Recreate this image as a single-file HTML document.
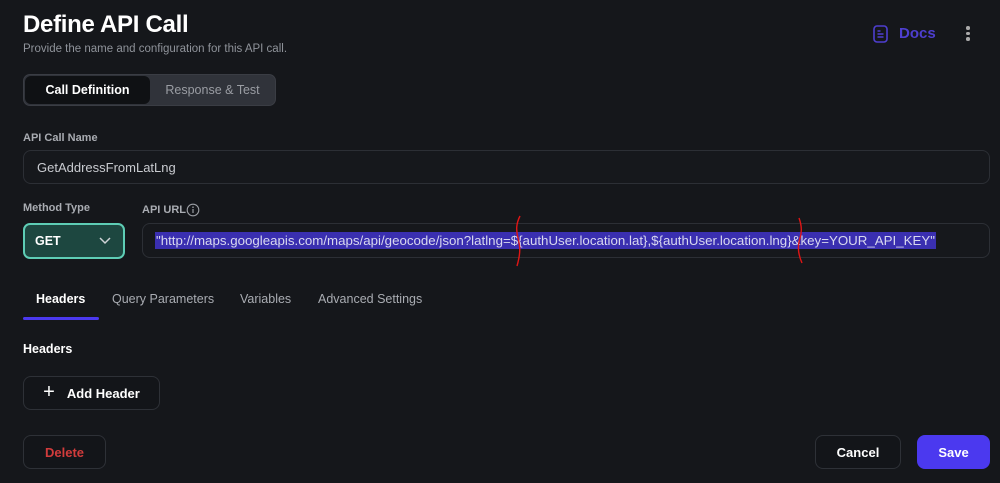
<!DOCTYPE html>
<html><head><meta charset="utf-8"><style>
*{box-sizing:border-box;margin:0;padding:0}
body{width:1000px;height:483px;background:#15171b;font-family:"Liberation Sans",sans-serif;color:#fff;position:relative;overflow:hidden}
.a{position:absolute}
.lbl{font-size:11px;font-weight:bold;color:#a9acb2}
.box{border:1px solid #2c2f35;border-radius:8px;background:#16181c}
.btn{border:1px solid #2e3137;border-radius:8px;background:#131519;font-size:13px;font-weight:bold;display:flex;align-items:center;justify-content:center}
</style></head><body>
<div class="a" style="left:23px;top:11px;font-size:24px;font-weight:bold;letter-spacing:-0.3px">Define API Call</div>
<div class="a" style="left:23px;top:43px;font-size:11.5px;color:#8f939a">Provide the name and configuration for this API call.</div>
<svg class="a" style="left:871px;top:24px" width="20" height="20" viewBox="0 0 20 20"><rect x="3" y="2" width="13" height="16" rx="3" fill="none" stroke="#4e3fd0" stroke-width="1.6"/><path d="M6.5 7h3M6.5 10h6M6.5 13h6" stroke="#4e3fd0" stroke-width="1.4"/></svg>
<div class="a" style="left:899px;top:25px;font-size:15px;font-weight:bold;color:#4e3fd0">Docs</div>
<div class="a" style="left:966px;top:26px;width:4px">
<div style="width:3.5px;height:3.5px;border-radius:50%;background:#aaa;margin-bottom:2px"></div><div style="width:3.5px;height:3.5px;border-radius:50%;background:#aaa;margin-bottom:2px"></div><div style="width:3.5px;height:3.5px;border-radius:50%;background:#aaa"></div></div>
<div class="a" style="left:23px;top:74px;width:253px;height:32px;border-radius:7px;background:#30333a;border:1px solid #3a3d44"></div>
<div class="a" style="left:25px;top:76px;width:125px;height:28px;border-radius:6px;background:#0f1114;font-size:12.5px;font-weight:bold;display:flex;align-items:center;justify-content:center">Call Definition</div>
<div class="a" style="left:150px;top:76px;width:125px;height:28px;font-size:12.5px;color:#9a9da3;display:flex;align-items:center;justify-content:center">Response &amp; Test</div>
<div class="a lbl" style="left:23px;top:132px">API Call Name</div>
<div class="a box" style="left:23px;top:150px;width:967px;height:34px"></div>
<div class="a" style="left:37px;top:160px;font-size:13px;color:#c9cbd0">GetAddressFromLatLng</div>
<div class="a lbl" style="left:23px;top:202px">Method Type</div>
<div class="a lbl" style="left:142px;top:204px">API URL</div>
<svg class="a" style="left:186px;top:203px" width="14" height="14"><circle cx="7" cy="7" r="5.8" fill="none" stroke="#9a9da3" stroke-width="1.1"/><path d="M7 6v4" stroke="#9a9da3" stroke-width="1.2"/><circle cx="7" cy="4.2" r=".8" fill="#9a9da3"/></svg>
<div class="a" style="left:23px;top:223px;width:102px;height:36px;border-radius:7px;background:#1d4740;border:2px solid #5ecdb5"></div>
<div class="a" style="left:35px;top:234px;font-size:12.5px;font-weight:bold">GET</div>
<svg class="a" style="left:99px;top:236px" width="12" height="10"><path d="M1 2l5 5 5-5" fill="none" stroke="#cfd3d6" stroke-width="1.5"/></svg>
<div class="a box" style="left:142px;top:223px;width:848px;height:35px"></div>
<div class="a" style="left:155px;top:232px;font-size:13.3px;background:#3a2fb0;color:#d8d8ef;padding:1px 1px;white-space:nowrap">"http://maps.googleapis.com/maps/api/geocode/json?latlng=${authUser.location.lat},${authUser.location.lng}&amp;key=YOUR_API_KEY"</div>
<svg class="a" style="left:0;top:0" width="1000" height="483"><path d="M520 216c-4 8-4 14 -2 22s3 14 -1 28" fill="none" stroke="#e01515" stroke-width="1.4"/><path d="M799 218c3 8 3 14 1 20s-3 14 2 25" fill="none" stroke="#e01515" stroke-width="1.4"/></svg>
<div class="a" style="left:36px;top:292px;font-size:12.5px;font-weight:bold">Headers</div>
<div class="a" style="left:23px;top:317px;width:76px;height:3px;border-radius:2px;background:#4b39ef"></div>
<div class="a" style="left:112px;top:292px;font-size:12.5px;color:#a9acb2">Query Parameters</div>
<div class="a" style="left:240px;top:292px;font-size:12.5px;color:#a9acb2">Variables</div>
<div class="a" style="left:318px;top:292px;font-size:12.5px;color:#a9acb2">Advanced Settings</div>
<div class="a" style="left:23px;top:342px;font-size:12.5px;font-weight:bold">Headers</div>
<div class="a btn" style="left:23px;top:376px;width:137px;height:34px"><span style="font-size:20px;font-weight:normal;margin-right:12px;margin-top:-2px">+</span>Add Header</div>
<div class="a btn" style="left:23px;top:435px;width:83px;height:34px;color:#d23c3c">Delete</div>
<div class="a btn" style="left:815px;top:435px;width:86px;height:34px">Cancel</div>
<div class="a btn" style="left:917px;top:435px;width:73px;height:34px;background:#4b39ef;border-color:#4b39ef">Save</div>
</body></html>
